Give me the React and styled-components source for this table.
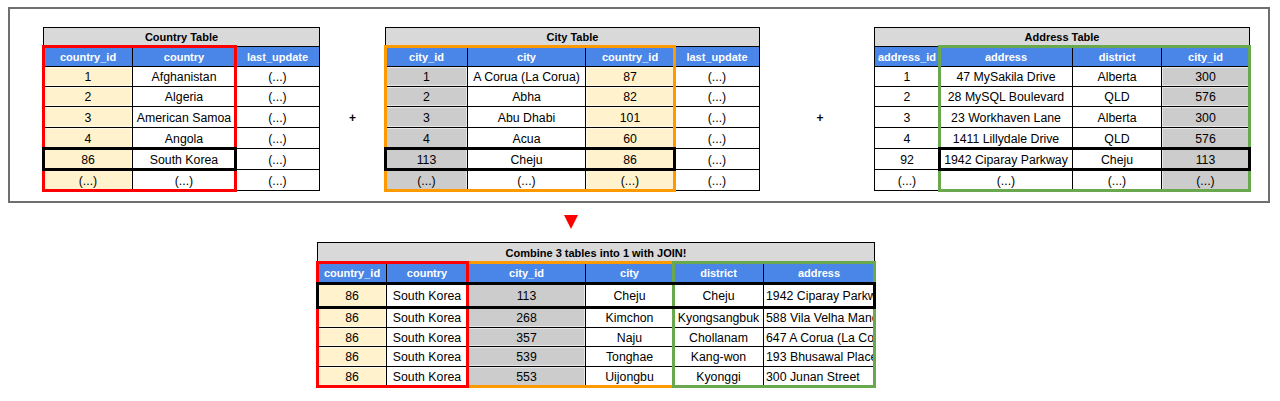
import React from 'react'
import styled, { createGlobalStyle } from 'styled-components'

const RED = '#ff0000'
const ORANGE = '#ff9900'
const GREEN = '#6aa84f'
const BLACK = '#000000'

const FILLS = {
  yellow: '#fff2cc',
  gray: '#cccccc',
  white: '#ffffff',
}

const countryTable = {
  title: 'Country Table',
  titlePitch: 19,
  cols: [
    { name: 'country_id', w: 89, fill: 'yellow' },
    { name: 'country', w: 103 },
    { name: 'last_update', w: 84 },
  ],
  rowPitches: [20, 20, 20, 21, 21, 21, 21],
  rows: [
    ['1', 'Afghanistan', '(...)'],
    ['2', 'Algeria', '(...)'],
    ['3', 'American Samoa', '(...)'],
    ['4', 'Angola', '(...)'],
    ['86', 'South Korea', '(...)'],
    ['(...)', '(...)', '(...)'],
  ],
  boxes: [
    { c: [0, 1], r: [0, 6], color: RED },
    { c: [0, 1], r: [5, 5], color: BLACK },
  ],
}

const cityTable = {
  title: 'City Table',
  titlePitch: 19,
  cols: [
    { name: 'city_id', w: 82, fill: 'gray' },
    { name: 'city', w: 118 },
    { name: 'country_id', w: 89, fill: 'yellow' },
    { name: 'last_update', w: 85 },
  ],
  rowPitches: [20, 20, 20, 21, 21, 21, 21],
  rows: [
    ['1', 'A Corua (La Corua)', '87', '(...)'],
    ['2', 'Abha', '82', '(...)'],
    ['3', 'Abu Dhabi', '101', '(...)'],
    ['4', 'Acua', '60', '(...)'],
    ['113', 'Cheju', '86', '(...)'],
    ['(...)', '(...)', '(...)', '(...)'],
  ],
  boxes: [
    { c: [0, 2], r: [0, 6], color: ORANGE },
    { c: [0, 2], r: [5, 5], color: BLACK },
  ],
}

const addressTable = {
  title: 'Address Table',
  titlePitch: 19,
  cols: [
    { name: 'address_id', w: 65 },
    { name: 'address', w: 133 },
    { name: 'district', w: 89 },
    { name: 'city_id', w: 88, fill: 'gray' },
  ],
  rowPitches: [20, 20, 20, 21, 21, 21, 21],
  rows: [
    ['1', '47 MySakila Drive', 'Alberta', '300'],
    ['2', '28 MySQL Boulevard', 'QLD', '576'],
    ['3', '23 Workhaven Lane', 'Alberta', '300'],
    ['4', '1411 Lillydale Drive', 'QLD', '576'],
    ['92', '1942 Ciparay Parkway', 'Cheju', '113'],
    ['(...)', '(...)', '(...)', '(...)'],
  ],
  boxes: [
    { c: [1, 3], r: [0, 6], color: GREEN },
    { c: [1, 3], r: [5, 5], color: BLACK },
  ],
}

const joinedTable = {
  title: 'Combine 3 tables into 1 with JOIN!',
  titlePitch: 20,
  cols: [
    { name: 'country_id', w: 69, fill: 'yellow' },
    { name: 'country', w: 81 },
    { name: 'city_id', w: 118, fill: 'gray' },
    { name: 'city', w: 88 },
    { name: 'district', w: 90 },
    { name: 'address', w: 111, left: true },
  ],
  rowPitches: [21, 24, 20, 19, 20, 20],
  rows: [
    ['86', 'South Korea', '113', 'Cheju', 'Cheju', '1942 Ciparay Parkway'],
    ['86', 'South Korea', '268', 'Kimchon', 'Kyongsangbuk', '588 Vila Velha Manor'],
    ['86', 'South Korea', '357', 'Naju', 'Chollanam', '647 A Corua (La Corua) Street'],
    ['86', 'South Korea', '539', 'Tonghae', 'Kang-won', '193 Bhusawal Place'],
    ['86', 'South Korea', '553', 'Uijongbu', 'Kyonggi', '300 Junan Street'],
  ],
  boxes: [
    { c: [2, 3], r: [0, 5], color: ORANGE },
    { c: [0, 1], r: [0, 5], color: RED },
    { c: [4, 5], r: [0, 5], color: GREEN },
    { c: [0, 5], r: [1, 1], color: BLACK },
  ],
}

function sum(list, n) {
  let s = 0
  for (let i = 0; i < n; i++) s += list[i]
  return s
}

function DataTable({ data }) {
  const widths = data.cols.map(c => c.w)
  const lineX = i => sum(widths, i)
  const lineY = r => data.titlePitch + sum(data.rowPitches, r)

  return (
    <TableWrap>
      <Grid
        $cols={widths.map(w => `${w - 1}px`).join(' ')}
        $rows={[data.titlePitch, ...data.rowPitches].map(h => `${h - 1}px`).join(' ')}
      >
        <TitleCell>{data.title}</TitleCell>
        {data.cols.map(col => (
          <HeadCell key={col.name}>{col.name}</HeadCell>
        ))}
        {data.rows.map((row, ri) =>
          row.map((val, ci) => (
            <Cell
              key={`${ri}-${ci}`}
              $fill={FILLS[data.cols[ci].fill || 'white']}
              $left={data.cols[ci].left}
            >
              {val}
            </Cell>
          ))
        )}
      </Grid>
      {data.boxes.map((b, i) => (
        <HighlightBox
          key={i}
          $color={b.color}
          $x={lineX(b.c[0]) - 1}
          $y={lineY(b.r[0]) - 1}
          $w={lineX(b.c[1] + 1) - lineX(b.c[0]) + 3}
          $h={lineY(b.r[1] + 1) - lineY(b.r[0]) + 3}
        />
      ))}
    </TableWrap>
  )
}

export default function App() {
  return (
    <Page>
      <GlobalStyle />
      <SourceFrame>
        <DataTable data={countryTable} />
        <PlusSlot $width={65}>+</PlusSlot>
        <DataTable data={cityTable} />
        <PlusSlot $width={114} $shift={3}>+</PlusSlot>
        <DataTable data={addressTable} />
      </SourceFrame>
      <ResultSection>
        <Arrow />
        <DataTable data={joinedTable} />
      </ResultSection>
    </Page>
  )
}

const GlobalStyle = createGlobalStyle`
  body {
    margin: 0;
    background: #ffffff;
    font-family: "Liberation Sans", Arial, sans-serif;
    color: #000;
  }
`

const Page = styled.div`
  width: 1280px;
  height: 401px;
  padding-top: 7px;
  box-sizing: border-box;
  overflow: hidden;
`

const SourceFrame = styled.div`
  margin-left: 8px;
  width: 1262px;
  box-sizing: border-box;
  border: 2px solid #6f6f6f;
  padding: 18px 18px 10px 33px;
  display: flex;
  align-items: flex-start;
`

const PlusSlot = styled.div`
  width: ${p => p.$width}px;
  align-self: stretch;
  display: flex;
  align-items: center;
  justify-content: center;
  padding-top: 18px;
  padding-left: ${p => (p.$shift || 0) * 2}px;
  box-sizing: border-box;
  font-size: 12px;
  font-weight: bold;
`

const TableWrap = styled.div`
  position: relative;
  flex: none;
`

const Grid = styled.div`
  display: grid;
  grid-template-columns: ${p => p.$cols};
  grid-template-rows: ${p => p.$rows};
  gap: 1px;
  padding: 1px;
  background: #000;
  width: max-content;
`

const TitleCell = styled.div`
  grid-column: 1 / -1;
  background: #d9d9d9;
  display: flex;
  align-items: center;
  justify-content: center;
  font-size: 11px;
  font-weight: bold;
  white-space: nowrap;
`

const HeadCell = styled.div`
  background: #4a86e8;
  color: #fff;
  display: flex;
  align-items: center;
  justify-content: center;
  font-size: 11px;
  font-weight: bold;
  white-space: nowrap;
  overflow: hidden;
`

const Cell = styled.div`
  background: ${p => p.$fill};
  box-shadow: inset 0 0 0 1px rgba(255, 255, 255, 0.55);
  display: flex;
  align-items: center;
  justify-content: ${p => (p.$left ? 'flex-start' : 'center')};
  padding: 1px ${p => (p.$left ? '2px' : '0')} 0;
  font-size: 12.3px;
  white-space: nowrap;
  overflow: hidden;
`

const HighlightBox = styled.div`
  position: absolute;
  left: ${p => p.$x}px;
  top: ${p => p.$y}px;
  width: ${p => p.$w}px;
  height: ${p => p.$h}px;
  border: 3px solid ${p => p.$color};
  box-sizing: border-box;
  pointer-events: none;
`

const ResultSection = styled.div`
  padding-left: 317px;
  padding-top: 12px;
  display: flex;
  flex-direction: column;
  align-items: flex-start;
`

const Arrow = styled.div`
  margin-left: 247px;
  margin-bottom: 13px;
  width: 0;
  height: 0;
  border-left: 7px solid transparent;
  border-right: 7px solid transparent;
  border-top: 14px solid #ff0000;
`
